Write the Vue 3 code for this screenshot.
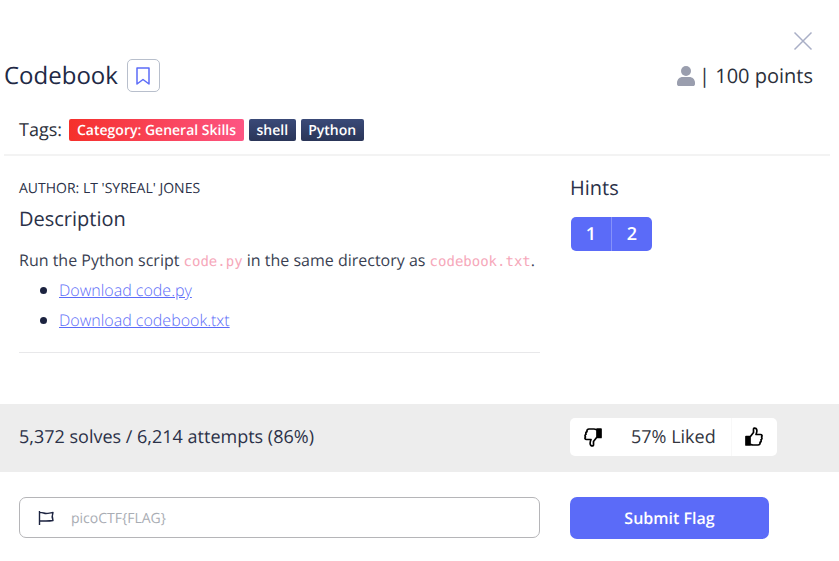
<script setup>
const tags = ['shell', 'Python']
</script>

<template>
  <div class="modal">
    <div class="close-row">
      <button class="close" aria-label="Close">
        <svg width="20" height="20" viewBox="0 0 20 20"><path d="M1.500 1.500 18.500 18.500M18.500 1.500 1.500 18.500" fill="none" stroke="#a9afc6" stroke-width="1.500"/></svg>
      </button>
    </div>
    <header class="head">
      <div class="title-wrap">
        <h1 class="title">Codebook</h1>
        <button class="bookmark" aria-label="Bookmark">
          <svg width="14" height="18" viewBox="0 0 14 18"><path d="M1 1H13V17L7 12.500 1 17Z" fill="none" stroke="#5c6cf8" stroke-width="1.500" stroke-linejoin="round"/></svg>
        </button>
      </div>
      <div class="points">
        <svg width="18" height="20" viewBox="0 0 18 20"><circle cx="9" cy="5" r="5" fill="#9a9eae"/><path d="M0 17C0 13 3 11 5.500 11H12.500C15 11 18 13 18 17V18C18 19.500 17 20 16 20H2C1 20 0 19.500 0 18Z" fill="#9a9eae"/></svg>
        <span>| 100 points</span>
      </div>
    </header>
    <div class="tags">
      <span class="tags-label">Tags:</span>
      <span class="tag tag-cat">Category: General Skills</span>
      <span v-for="t in tags" :key="t" class="tag">{{ t }}</span>
    </div>
    <div class="rule"></div>
    <div class="cols">
      <section class="main">
        <div class="author">AUTHOR: LT 'SYREAL' JONES</div>
        <h2 class="desc-h">Description</h2>
        <p class="desc">Run the Python script <code>code.py</code> in the same directory as <code>codebook.txt</code>.</p>
        <ul class="links">
          <li><a href="#">Download code.py</a></li>
          <li><a href="#">Download codebook.txt</a></li>
        </ul>
        <div class="main-rule"></div>
      </section>
      <aside class="side">
        <h2 class="hints-h">Hints</h2>
        <div class="hints">
          <button>1</button>
          <button>2</button>
        </div>
      </aside>
    </div>
    <div class="band">
      <div class="solves">5,372 solves / 6,214 attempts (86%)</div>
      <div class="likes">
        <svg class="thumb" width="18" height="20" viewBox="0 0 18 20"><g transform="rotate(180 9 10)"><path d="M1 9.500H5V18H1ZM5 10 8.500 5.500V2C8.500 1 10 .7 11 1.500 12.200 2.500 12 5 11 7.500H15.500C17 7.500 17.500 9 16.500 10 17.300 11 17 12.300 16 12.800 16.500 14 16 15 15 15.400 15.300 16.800 14.500 18 13 18H8C6.500 18 6 17.300 5 17" fill="none" stroke="#000" stroke-width="1.700" stroke-linejoin="round"/><path d="M1 9.500H5V18H1Z" fill="#000"/></g></svg>
        <span class="liked">57% Liked</span>
        <span class="up-wrap">
          <svg class="thumb" width="18" height="20" viewBox="0 0 18 20"><path d="M1 9.500H5V18H1ZM5 10 8.500 5.500V2C8.500 1 10 .7 11 1.500 12.200 2.500 12 5 11 7.500H15.500C17 7.500 17.500 9 16.500 10 17.300 11 17 12.300 16 12.800 16.500 14 16 15 15 15.400 15.300 16.800 14.500 18 13 18H8C6.500 18 6 17.300 5 17" fill="none" stroke="#000" stroke-width="1.700" stroke-linejoin="round"/><path d="M1 9.500H5V18H1Z" fill="#000"/></svg>
        </span>
      </div>
    </div>
    <div class="submit-row">
      <div class="flag-input">
        <svg width="16" height="16" viewBox="0 0 16 16"><path d="M1.500 1V15M1 2.500C4 2 6 3.500 8 3.500S12 3 15 2.500C14 5 14 8 15 10.500 12 11 10 11 8 11S4 11 1.500 11" fill="none" stroke="#1c2340" stroke-width="1.400" stroke-linejoin="round"/></svg>
        <span class="placeholder">picoCTF{FLAG}</span>
      </div>
      <button class="submit">Submit Flag</button>
    </div>
  </div>
</template>

<style>
html, body { margin: 0; background: #fff; }
</style>

<style scoped>
.modal {
  width: 839px;
  height: 561px;
  overflow: hidden;
  font-family: "Open Sans", "Noto Sans", sans-serif;
  color: #212945;
  box-sizing: border-box;
  text-rendering: geometricPrecision;
}
button { font-family: inherit; text-rendering: geometricPrecision; }
.close-row { display: flex; justify-content: flex-end; padding: 31px 26px 0 0; height: 22px; }
.close { border: 0; background: none; padding: 0; width: 20px; height: 20px; }
.head { display: flex; justify-content: space-between; align-items: center; padding: 6px 26px 0 4px; height: 33px; }
.title-wrap { display: flex; align-items: center; gap: 9px; }
.title { margin: 0; font-size: 24px; font-weight: 400; line-height: 32px; }
.bookmark { width: 33px; height: 33px; border: 1px solid #b8bfcc; border-radius: 5px; background: #fff; padding: 0; display: flex; align-items: center; justify-content: center; }
.points { display: flex; align-items: center; gap: 4px; font-size: 20px; color: #2b2f3a; }
.tags { display: flex; align-items: center; gap: 5px; padding: 27px 0 0 19px; height: 22px; }
.tags-label { font-size: 18px; color: #2b2f3a; margin-right: 2px; }
.tag { background: linear-gradient(to bottom, #3a4a78, #2a3558); color: #fff; font-size: 14px; font-weight: 600; border-radius: 2px; height: 22px; line-height: 23px; padding: 0 7.500px; }
.tag-cat { background: linear-gradient(to right, #f5302b, #fd5583); padding: 0 8px; }
.rule { height: 2px; background: #f3f3f3; margin: 13px 9px 0 4px; }
.cols { display: flex; height: 248px; }
.main { width: 521px; margin-left: 19px; }
.author { font-size: 14px; line-height: 16px; margin-top: 25px; color: #2b3148; }
.desc-h { margin: 8px 0 0; font-size: 20px; font-weight: 400; line-height: 27px; color: #2a3148; }
.desc { margin: 17px 0 0; font-size: 16px; line-height: 22px; color: #3a3f52; }
code { font-family: "DejaVu Sans Mono", monospace; font-size: 14px; color: #f6a8ba; }
.links { margin: 6px 0 0; padding: 0 0 0 40px; list-style: none; font-size: 16px; }
.links li { line-height: 22px; margin-bottom: 8px; }
.links li::before { content: ""; display: inline-block; width: 7px; height: 7px; border-radius: 50%; background: #1c2340; margin: 0 12px 3px -19px; vertical-align: middle; }
.links a { color: #5b6bf8; font-weight: 300; }
.main-rule { height: 1px; background: #e8e8ea; margin-top: 21px; }
.side { margin-left: 30px; }
.hints-h { margin: 18px 0 0; font-size: 20px; font-weight: 400; line-height: 27px; color: #2a3148; }
.hints { display: flex; margin-top: 16px; margin-left: 1px; }
.hints button { width: 41px; height: 34px; border: 0; background: #5b6bf8; color: #fff; font-size: 18px; font-weight: 600; padding: 0; }
.hints button:first-child { border-radius: 5px 0 0 5px; border-right: 1px solid #8591fa; }
.hints button:last-child { border-radius: 0 5px 5px 0; width: 40px; }
.band { background: #ededed; height: 68px; display: flex; align-items: center; padding-left: 19px; }
.solves { width: 551px; font-size: 18px; line-height: 24px; margin-top: -3px; color: #2b3148; }
.likes { width: 207px; height: 38px; margin-top: -3px; background: #fff; border-radius: 5px; display: flex; align-items: center; padding: 0 0 0 14px; box-sizing: border-box; }
.liked { font-size: 18px; color: #33363f; margin-left: 29px; width: 100px; }
.thumb { flex: none; }
.up-wrap { margin-left: auto; height: 38px; display: flex; align-items: center; border-left: 1px solid #f8f8f8; padding: 0 14px 0 13px; }
.submit-row { display: flex; padding: 25px 0 0 19px; }
.flag-input { width: 521px; height: 41px; box-sizing: border-box; border: 1px solid #b5b5b8; border-radius: 7px; display: flex; align-items: center; padding-left: 18px; }
.placeholder { margin-left: 17px; margin-top: 1px; font-size: 14px; color: #a9adb4; }
.submit { margin-left: 30px; width: 199px; height: 42px; border: 0; border-radius: 7px; background: #5b6bf8; color: #fff; font-size: 16px; font-weight: 600; }
</style>
